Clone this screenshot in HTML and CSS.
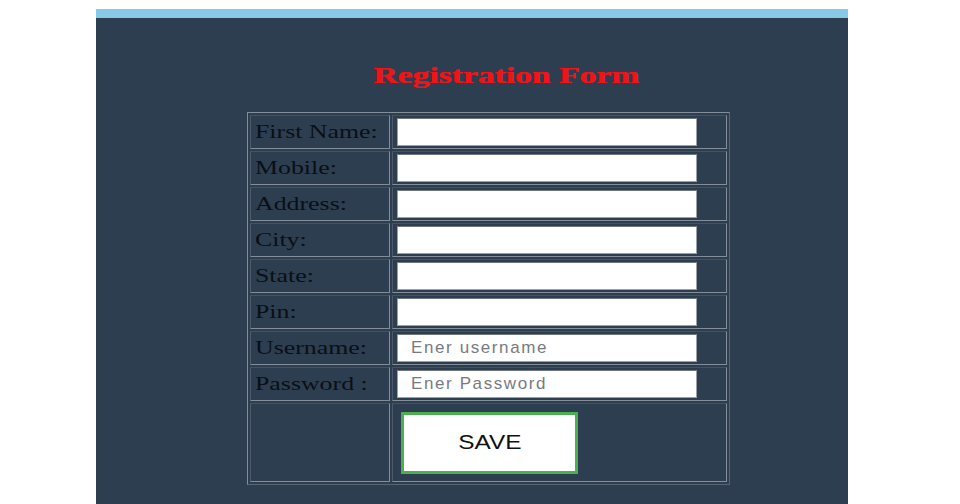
FILE: index.html
```html
<!DOCTYPE html>
<html>
<head>
<meta charset="utf-8">
<title>Registration Form</title>
<link rel="stylesheet" href="styles.css">
</head>
<body>
<div class="page">
  <div class="topbar"></div>
  <div class="panel">
    <h1 class="title"><span class="stretch-title">Registration Form</span></h1>
    <table class="form-table">
      <colgroup><col class="col-label"><col class="col-field"></colgroup>
      <tr><td class="label"><span class="stretch">First Name:</span></td><td class="field"><input type="text"></td></tr>
      <tr><td class="label"><span class="stretch">Mobile:</span></td><td class="field"><input type="text"></td></tr>
      <tr><td class="label"><span class="stretch">Address:</span></td><td class="field"><input type="text"></td></tr>
      <tr><td class="label"><span class="stretch">City:</span></td><td class="field"><input type="text"></td></tr>
      <tr><td class="label"><span class="stretch">State:</span></td><td class="field"><input type="text"></td></tr>
      <tr><td class="label"><span class="stretch">Pin:</span></td><td class="field"><input type="text"></td></tr>
      <tr><td class="label"><span class="stretch">Username:</span></td><td class="field"><input type="text" placeholder="Ener username"></td></tr>
      <tr><td class="label"><span class="stretch">Password :</span></td><td class="field"><input type="password" placeholder="Ener Password"></td></tr>
      <tr class="save-row"><td class="label"></td><td class="field"><button class="save" type="button"><span class="stretch-btn">SAVE</span></button></td></tr>
    </table>
  </div>
</div>
</body>
</html>
```
FILE: styles.css
```css
html, body {
  margin: 0;
  padding: 0;
  background: #ffffff;
}
.page {
  margin-left: 96px;
  width: 752px;
  padding-top: 9px;
  height: 495px;
  display: flex;
  flex-direction: column;
}
.topbar {
  height: 9px;
  background: #87c9e6;
}
.panel {
  flex: 1;
  background: #2d3e50;
  padding-top: 43px;
}
.title {
  margin: 0 0 23px 277px;
  height: 28px;
  font: bold 24px/28px "Liberation Serif", "Times New Roman", serif;
  color: #ee1418;
  text-shadow: 0.5px 0 0 #ee1418;
}
.stretch-title {
  display: inline-block;
  transform: scaleX(1.4);
  transform-origin: left center;
  white-space: nowrap;
}
.form-table {
  margin-left: 151px;
  width: 483px;
  table-layout: fixed;
  border: 1px solid #838e99;
  border-right-color: #5a6571;
  border-bottom-color: #5a6571;
  border-spacing: 2px;
  border-collapse: separate;
}
.col-label { width: 140px; }
.col-field { width: 335px; }
.form-table td {
  border: 1px solid #838e99;
  border-top-color: #46525f;
  border-left-color: #4e5a67;
  padding: 0;
  height: 32px;
  vertical-align: middle;
}
.label {
  padding: 0 0 0 4px !important;
  font: 19px/20px "Liberation Serif", "Times New Roman", serif;
  color: #0b0f14;
}
.stretch {
  display: inline-block;
  transform: scaleX(1.36);
  transform-origin: left center;
  white-space: nowrap;
}
.field {
  padding: 0 0 0 4px !important;
}
.field input {
  display: block;
  box-sizing: border-box;
  width: 300px;
  height: 28px;
  margin: 0;
  border: 1px solid #9aa0a6;
  border-top-color: #6e757c;
  background: #ffffff;
  padding: 0 0 0 13px;
  font: 17px "Liberation Sans", Arial, sans-serif;
  letter-spacing: 1.6px;
  color: #333;
}
.field input::placeholder {
  color: #777b80;
  opacity: 1;
}
.save-row td {
  height: 77px;
}
.save-row .field {
  padding-left: 8px !important;
}
.save {
  display: block;
  box-sizing: border-box;
  width: 177px;
  height: 62px;
  margin: 0;
  background: #ffffff;
  border: 3px solid #4caf50;
  font: 20px "Liberation Sans", Arial, sans-serif;
  color: #111;
  padding: 0;
  text-align: center;
}
.stretch-btn {
  display: inline-block;
  transform: scaleX(1.22);
  transform-origin: center center;
}
```
